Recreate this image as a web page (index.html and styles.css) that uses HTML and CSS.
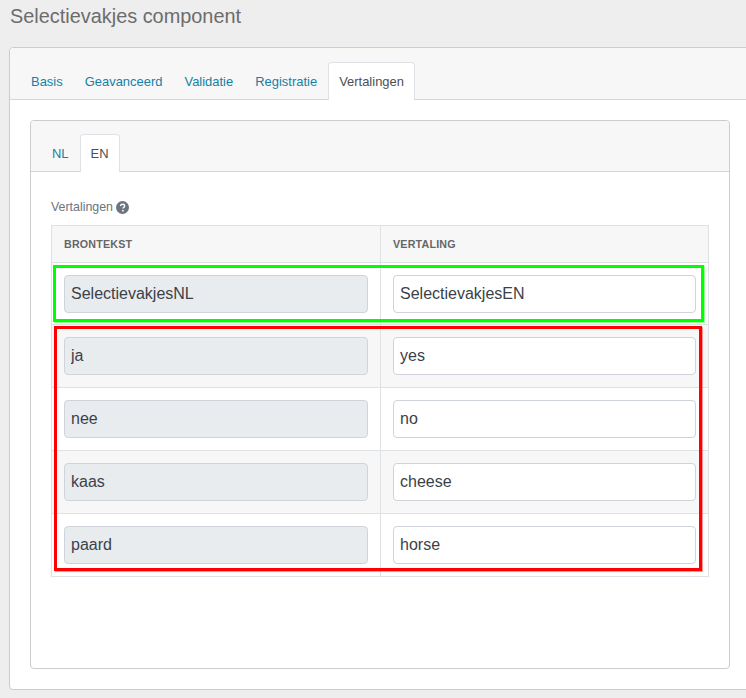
FILE: index.html
```html
<!DOCTYPE html>
<html lang="nl">
<head>
    <meta charset="UTF-8">
    <title>Selectievakjes component</title>
    <link rel="stylesheet" href="styles.css">
</head>
<body>
    <h1 class="page-title">Selectievakjes component</h1>

    <div class="card outer-card">
        <div class="tabs outer-tabs">
            <a class="tab">Basis</a>
            <a class="tab">Geavanceerd</a>
            <a class="tab">Validatie</a>
            <a class="tab">Registratie</a>
            <a class="tab active">Vertalingen</a>
        </div>

        <div class="outer-body">
            <div class="card inner-card">
                <div class="tabs inner-tabs">
                    <a class="tab">NL</a>
                    <a class="tab active">EN</a>
                </div>

                <div class="inner-body">
                    <div class="field-label">
                        Vertalingen
                        <svg class="help" viewBox="0 0 512 512" width="13" height="13">
                            <circle cx="256" cy="256" r="256" fill="#6c757d"/>
                            <path d="M176 200c4-46 38-72 84-72 44 0 80 26 80 68 0 34-20 50-44 64-18 11-22 18-22 38" fill="none" stroke="#fff" stroke-width="56"/>
                            <circle cx="272" cy="380" r="36" fill="#fff"/>
                        </svg>
                    </div>

                    <div class="table-wrap">
                        <table>
                            <tr>
                                <th>Brontekst</th>
                                <th>Vertaling</th>
                            </tr>
                            <tr class="first-row">
                                <td><input class="form-input" value="SelectievakjesNL" disabled></td>
                                <td><input class="form-input" value="SelectievakjesEN"></td>
                            </tr>
                            <tr>
                                <td><input class="form-input" value="ja" disabled></td>
                                <td><input class="form-input" value="yes"></td>
                            </tr>
                            <tr>
                                <td><input class="form-input" value="nee" disabled></td>
                                <td><input class="form-input" value="no"></td>
                            </tr>
                            <tr>
                                <td><input class="form-input" value="kaas" disabled></td>
                                <td><input class="form-input" value="cheese"></td>
                            </tr>
                            <tr>
                                <td><input class="form-input" value="paard" disabled></td>
                                <td><input class="form-input" value="horse"></td>
                            </tr>
                        </table>

                        <div class="mark mark-green"></div>
                        <div class="mark mark-red"></div>
                    </div>
                </div>
            </div>
        </div>
    </div>
</body>
</html>
```

FILE: styles.css
```css
*{
    box-sizing: border-box;
    margin: 0;
    padding: 0;
}
html,body{
    height: 698px;
    overflow: hidden;
}
body{
    background: #eeeeee;
    font-family: "Liberation Sans", Arial, sans-serif;
    color: #495057;
    padding-left: 9px;
}
.page-title{
    font-size: 19.9px;
    font-weight: 400;
    line-height: 24px;
    color: #6c6c6c;
    padding: 4px 0 0 1px;
    height: 47px;
}
.card{
    border: 1px solid #cccccc;
    border-radius: 4px;
    background: #fff;
}
.outer-card{
    width: 760px;
    height: 643px;
}
.tabs{
    display: flex;
    align-items: flex-end;
    background: #f7f7f7;
    border-bottom: 1px solid #d6d6d6;
    border-radius: 4px 4px 0 0;
}
.outer-tabs{
    height: 52px;
    padding-left: 10px;
}
.inner-tabs{
    height: 51px;
    padding-left: 10px;
}
.tab{
    font-size: 12.96px;
    line-height: 18px;
    color: #157fa8;
    padding: 10px;
    height: 38px;
    margin-bottom: -1px;
    border: 1px solid transparent;
    border-bottom: 0;
    border-radius: 4px 4px 0 0;
}
.tab.active{
    color: #495057;
    background: #fff;
    border-color: #dee2e6;
}
.outer-body{
    padding: 20px;
}
.inner-card{
    width: 700px;
    height: 549px;
}
.inner-body{
    padding: 27px 20px 0;
}
.field-label{
    display: flex;
    align-items: center;
    gap: 3px;
    font-size: 12.4px;
    line-height: 16px;
    color: #6c757d;
    height: 26px;
    padding-bottom: 10px;
}
.table-wrap{
    position: relative;
    width: 658px;
}
table{
    width: 100%;
    border-collapse: collapse;
    table-layout: fixed;
}
th,td{
    border: 1px solid #dee2e6;
    padding: 12px;
    text-align: left;
}
th{
    background: #f7f7f7;
    font-size: 10.7px;
    font-weight: 700;
    letter-spacing: 0.2px;
    line-height: 13px;
    text-transform: uppercase;
    color: #666666;
    height: 37px;
    padding-top: 11px;
    padding-bottom: 11px;
}
tr:nth-child(odd) td{
    background: #f7f7f7;
}
.first-row td{
    padding-bottom: 11px;
}
tr:first-child th:first-child,
td:first-child{
    width: 329px;
}
.form-input{
    display: block;
    width: 100%;
    height: 38px;
    border: 1px solid #ced4da;
    border-radius: 4px;
    background: #fff;
    padding: 0 6px;
    font-family: inherit;
    font-size: 16px;
    color: #3b4149;
    opacity: 1;
}
.form-input:disabled{
    background: #e9ecef;
}
.mark{
    position: absolute;
    border-style: solid;
    border-width: 3px;
}
.mark-green{
    left: 2px;
    top: 40px;
    width: 651px;
    height: 57px;
    border-color: #00ff00;
    box-shadow: 1px 1px 0 rgba(0, 255, 0, 0.4);
}
.mark-red{
    left: 3px;
    top: 101px;
    width: 648px;
    height: 245px;
    border-color: #ff0000;
    box-shadow: 1px 1px 0 rgba(255, 0, 0, 0.4);
}
```
